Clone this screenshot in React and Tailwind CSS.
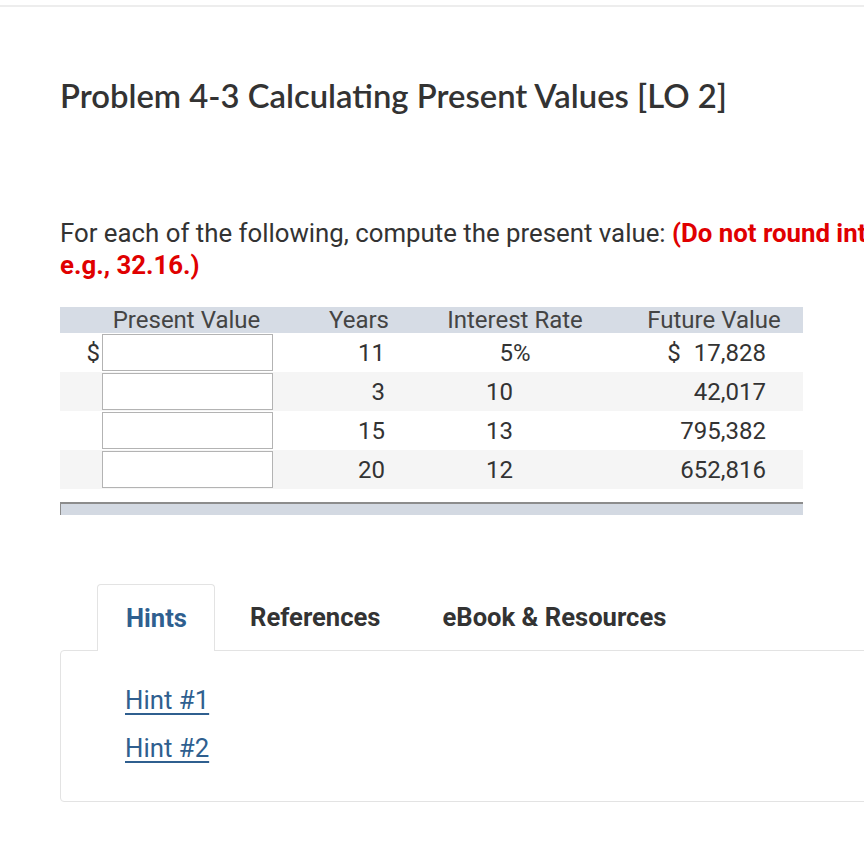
const rows = [
  { dollar: true, years: "11", rate: "5", pct: true, fv: "17,828", fvDollar: true },
  { dollar: false, years: "3", rate: "10", pct: false, fv: "42,017", fvDollar: false },
  { dollar: false, years: "15", rate: "13", pct: false, fv: "795,382", fvDollar: false },
  { dollar: false, years: "20", rate: "12", pct: false, fv: "652,816", fvDollar: false }
];

function Row({ row, index }) {
  const bg = index % 2 === 1 ? "bg-[#f5f5f5]" : "bg-white";
  return (
    <div className={`flex h-[39px] items-center text-[24px] leading-[28px] text-[#333] ${bg}`}>
      <div className="flex h-full w-[253px] items-center">
        <span className="w-[42px] pr-[2px] text-right">{row.dollar ? "$" : ""}</span>
        <input
          type="text"
          className="h-[37px] w-[171px] border border-[#b3b3b3] bg-white outline-none"
        />
      </div>
      <div className="w-[92px] pr-[20px] text-right">{row.years}</div>
      <div className="w-[220px] pr-[112px] text-right">
        <span className="relative">
          {row.rate}
          {row.pct ? <span className="absolute left-full top-0">%</span> : null}
        </span>
      </div>
      <div className="flex w-[178px] justify-end pr-[37px]">
        {row.fvDollar ? <span className="mr-[13px]">$</span> : null}
        <span>{row.fv}</span>
      </div>
    </div>
  );
}

export default function App() {
  return (
    <div className="relative h-[864px] w-[864px] overflow-hidden bg-white font-['Roboto',sans-serif]">
      <div className="mt-[5px] h-[2px] w-full bg-[#ededed]" />

      <h1 className="ml-[60px] mt-[69px] whitespace-nowrap font-['Lato',sans-serif] text-[32.8px] font-semibold leading-[40px] text-[#333]">
        Problem 4-3 Calculating Present Values [LO 2]
      </h1>

      <p className="ml-[60px] mt-[101px] text-[25.8px] leading-[32px] text-[#333]">
        <span className="whitespace-nowrap">
          For each of the following, compute the present value:{" "}
          <strong className="font-bold text-[#e00000]">
            (Do not round intermediate calculations and round your answers to 2 decimal places,
          </strong>
        </span>
        <br />
        <strong className="font-bold text-[#e00000]">e.g., 32.16.)</strong>
      </p>

      <div className="ml-[60px] mt-[26px] w-[743px]">
        <div className="flex h-[26px] items-center bg-[#d6dce5] text-[24px] leading-[26px] text-[#444]">
          <div className="w-[253px] text-center">Present Value</div>
          <div className="w-[92px] text-center">Years</div>
          <div className="w-[220px] text-center">Interest Rate</div>
          <div className="w-[178px] text-center">Future Value</div>
        </div>
        {rows.map((row, i) => (
          <Row key={i} row={row} index={i} />
        ))}
        <div className="mt-[13px] h-[13px] border-l border-t-2 border-[#8c8c8c] bg-[#d3d9e2]" />
      </div>

      <div className="ml-[60px] mt-[69px] w-[900px]">
        <div className="flex h-[66px] items-stretch text-[25.6px] font-bold">
          <div className="ml-[37px] -mb-px flex items-center rounded-t-[4px] border border-b-0 border-[#e3e3e3] bg-white pl-[28px] pr-[27px] text-[#2f5f8f]">
            Hints
          </div>
          <div className="flex items-center pl-[35px] text-[#333]">References</div>
          <div className="flex items-center pl-[62px] text-[#333]">eBook &amp; Resources</div>
        </div>
        <div className="flex h-[152px] flex-col gap-[16px] rounded-[4px] border border-[#e3e3e3] pl-[64px] pt-[33px] text-[25.8px] text-[#2f5f8f]">
          <a href="#" className="w-fit leading-[32px] underline underline-offset-[4px]">Hint #1</a>
          <a href="#" className="w-fit leading-[32px] underline underline-offset-[4px]">Hint #2</a>
        </div>
      </div>
    </div>
  );
}
